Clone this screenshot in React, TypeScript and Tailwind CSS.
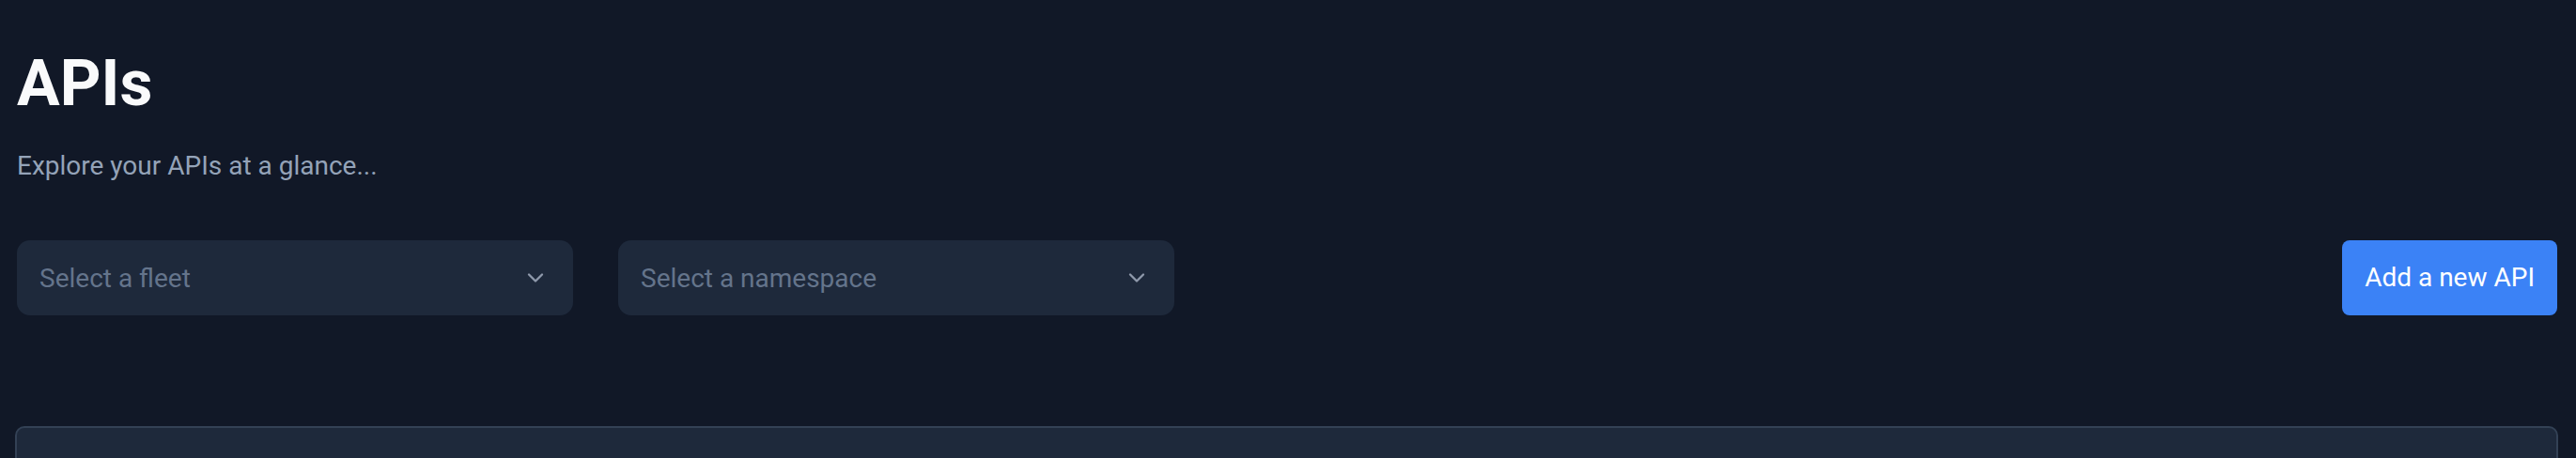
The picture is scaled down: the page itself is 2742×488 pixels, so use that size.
import React from "react";
import { ChevronDown } from "lucide-react";

function SelectBox({ label }: { label: string }) {
  return (
    <div className="flex h-[80px] w-[592px] items-center justify-between rounded-[14px] bg-[#1e293b] pl-[24px] pr-[26px]">
      <span className="pt-[1px] text-[28px] leading-[28px] text-[#64748b]">{label}</span>
      <ChevronDown size={28} strokeWidth={2} className="text-[#8f99ab]" />
    </div>
  );
}

export default function App() {
  return (
    <div
      className="min-h-[488px] w-full bg-[#111827] pl-[18px] pr-[20px] pt-[54px]"
      style={{ fontFamily: "Roboto, 'Liberation Sans', sans-serif" }}
    >
      <h1 className="text-[68px] font-bold leading-[70px] text-[#f9fafb]">APIs</h1>
      <p className="mt-[39px] text-[28px] leading-[28px] text-[#94a3b8]">
        Explore your APIs at a glance...
      </p>
      <div className="mt-[65px] flex items-center justify-between">
        <div className="flex gap-[48px]">
          <SelectBox label="Select a fleet" />
          <SelectBox label="Select a namespace" />
        </div>
        <button className="flex h-[80px] items-center rounded-[8px] bg-[#3b82f6] px-[24px] text-[28px] leading-[28px] text-white">
          Add a new API
        </button>
      </div>
      <div className="-ml-[2px] -mr-[1px] mt-[118px] h-[200px] rounded-[10px] border-2 border-[#334155] bg-[#1e293b]" />
    </div>
  );
}
